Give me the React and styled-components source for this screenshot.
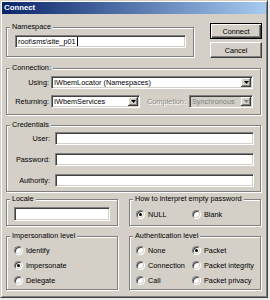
import React from 'react';
import styled, { createGlobalStyle } from 'styled-components';

const Global = createGlobalStyle`
  html, body { margin: 0; padding: 0; background: #ececec; }
  body { font-family: "Liberation Sans", Arial, sans-serif; font-size: 7.3px; color: #000; }
  * { box-sizing: border-box; }
`;

const Window = styled.div`
  width: 268px;
  height: 298px;
  background: #d4d0c8;
  border: 1px solid;
  border-color: #d4d0c8 #404040 #404040 #d4d0c8;
  box-shadow: inset 1px 1px 0 #fff, inset -1px -1px 0 #808080;
  padding: 1px;
  display: flex;
  flex-direction: column;
`;

const TitleBar = styled.div`
  height: 12px;
  background: linear-gradient(to right, #0a246a, #a6caf0);
  color: #fff;
  font-weight: bold;
  font-size: 7.8px;
  line-height: 12px;
  padding-left: 2px;
`;

const Body = styled.div`
  padding: 8px 4px 0 4px;
  display: flex;
  flex-direction: column;
`;

const Row = styled.div`
  display: flex;
  align-items: ${p => p.$align || 'stretch'};
  margin-top: ${p => p.$mt || 0}px;
`;

const Group = styled.fieldset`
  margin: 0;
  margin-top: ${p => p.$mt || 0}px;
  margin-left: ${p => p.$ml || 0}px;
  padding: 0;
  border: 1px solid #808080;
  box-shadow: inset 1px 1px 0 #fff, 1px 1px 0 #fff;
  min-width: 0;
  width: ${p => p.$w}px;
`;

const Caption = styled.legend`
  margin-left: 3px;
  padding: 0 2px;
  height: 10px;
  line-height: 10px;
  background: #d4d0c8;
`;

const Content = styled.div`
  padding: ${p => p.$pad};
  display: flex;
  flex-direction: column;
  gap: ${p => p.$gap || 0}px;
`;

const Field = styled.div`
  width: ${p => p.$w}px;
  height: ${p => p.$h || 13}px;
  background: #fff;
  border: 1px solid;
  border-color: #808080 #fff #fff #808080;
  box-shadow: inset 1px 1px 0 #404040, inset -1px -1px 0 #d4d0c8;
  padding: 0 2px;
  display: flex;
  align-items: center;
  white-space: nowrap;
  overflow: hidden;
  line-height: 9px;
`;

const Caret = styled.span`
  display: inline-block;
  width: 1px;
  height: 9px;
  background: #000;
  margin-left: 1px;
`;

const Combo = styled.div`
  width: ${p => p.$w}px;
  height: 13px;
  background: ${p => (p.$disabled ? '#d4d0c8' : '#fff')};
  color: ${p => (p.$disabled ? '#808080' : '#000')};
  border: 1px solid;
  border-color: #808080 #fff #fff #808080;
  box-shadow: inset 1px 1px 0 #404040, inset -1px -1px 0 #d4d0c8;
  padding: 1px;
  display: flex;
  align-items: center;
`;

const ComboText = styled.span`
  flex: 1;
  padding-left: 1px;
  white-space: nowrap;
  overflow: hidden;
  line-height: 9px;
`;

const ArrowBtn = styled.span`
  width: 10px;
  height: 9px;
  background: #d4d0c8;
  box-shadow: inset -1px -1px 0 #404040, inset 1px 1px 0 #fff, inset -2px -2px 0 #808080;
  display: flex;
  align-items: center;
  justify-content: center;
`;

const Label = styled.span`
  width: ${p => p.$w}px;
  margin-right: ${p => p.$mr || 0}px;
  margin-left: ${p => p.$ml || 0}px;
  text-align: ${p => p.$align || 'right'};
  white-space: nowrap;
  color: ${p => (p.$disabled ? '#8c8a85' : '#000')};
  text-shadow: ${p => (p.$disabled ? '1px 1px 0 #fff' : 'none')};
`;

const Line = styled.div`
  display: flex;
  align-items: center;
  height: 13px;
`;

const ButtonCol = styled.div`
  margin-left: auto;
  padding-top: 1px;
  width: 52px;
  display: flex;
  flex-direction: column;
  gap: 3px;
`;

const Button = styled.div`
  height: 16px;
  display: flex;
  align-items: center;
  justify-content: center;
  background: #d4d0c8;
  border: 1px solid;
  border-color: ${p => (p.$default ? '#000' : '#fff #404040 #404040 #fff')};
  box-shadow: ${p =>
    p.$default
      ? 'inset 1px 1px 0 #fff, inset -1px -1px 0 #404040, inset -2px -2px 0 #808080'
      : 'inset -1px -1px 0 #808080'};
`;

const RadioGrid = styled.div`
  display: grid;
  grid-template-columns: ${p => p.$cols || '1fr'};
  row-gap: 3px;
  padding: ${p => p.$pad};
`;

const RadioItem = styled.div`
  display: flex;
  align-items: center;
  height: 12px;
  gap: 3px;
  white-space: nowrap;
`;

const RadioCircle = styled.span`
  position: relative;
  width: 9px;
  height: 9px;
  flex: none;
  border-radius: 50%;
  background: #fff;
  border: 1px solid;
  border-color: #808080 #fff #fff #808080;
  box-shadow: inset 1px 1px 0 #404040, inset -1px -1px 0 #d4d0c8;
  &::after {
    content: '';
    display: ${p => (p.$checked ? 'block' : 'none')};
    position: absolute;
    left: 2px;
    top: 2px;
    width: 3px;
    height: 3px;
    border-radius: 50%;
    background: #000;
  }
`;

const Arrow = ({ disabled }) => (
  <svg width="5" height="3" viewBox="0 0 5 3">
    <polygon points="0,0 5,0 2.5,3" fill={disabled ? '#808080' : '#000'} />
  </svg>
);

const Radio = ({ label, checked }) => (
  <RadioItem>
    <RadioCircle $checked={checked} />
    <span>{label}</span>
  </RadioItem>
);

const namespace = 'root\\sms\\site_p01';

export default function App() {
  return (
    <>
      <Global />
      <Window>
        <TitleBar>Connect</TitleBar>
        <Body>
          <Row $align="flex-start">
            <Group $w={188}>
              <Caption>Namespace</Caption>
              <Content $pad="3px 7px 8px 8px">
                <Field $w={171}>
                  {namespace}<Caret />
                </Field>
              </Content>
            </Group>
            <ButtonCol>
              <Button $default>Connect</Button>
              <Button>Cancel</Button>
            </ButtonCol>
          </Row>

          <Group $w={255} $mt={5}>
            <Caption>Connection:</Caption>
            <Content $pad="3px 7px 6px 0" $gap={6}>
              <Line>
                <Label $w={42} $mr={2}>Using:</Label>
                <Combo $w={202}>
                  <ComboText>IWbemLocator (Namespaces)</ComboText>
                  <ArrowBtn><Arrow /></ArrowBtn>
                </Combo>
              </Line>
              <Line>
                <Label $w={42} $mr={2}>Returning:</Label>
                <Combo $w={89}>
                  <ComboText>IWbemServices</ComboText>
                  <ArrowBtn><Arrow /></ArrowBtn>
                </Combo>
                <Label $w={42} $ml={7} $align="left" $disabled>Completion:</Label>
                <Combo $w={64} $disabled>
                  <ComboText>Synchronous</ComboText>
                  <ArrowBtn><Arrow disabled /></ArrowBtn>
                </Combo>
              </Line>
            </Content>
          </Group>

          <Group $w={255} $mt={5}>
            <Caption>Credentials</Caption>
            <Content $pad="2px 6px 4px 0" $gap={8}>
              <Line>
                <Label $w={43} $mr={5}>User:</Label>
                <Field $w={199} />
              </Line>
              <Line>
                <Label $w={43} $mr={5}>Password:</Label>
                <Field $w={199} />
              </Line>
              <Line>
                <Label $w={43} $mr={5}>Authority:</Label>
                <Field $w={199} />
              </Line>
            </Content>
          </Group>

          <Row $mt={2}>
            <Group $w={112}>
              <Caption>Locale</Caption>
              <Content $pad="3px 7px 4px 7px">
                <Field $w={96} $h={14} />
              </Content>
            </Group>
            <Group $w={132} $ml={11}>
              <Caption>How to interpret empty password</Caption>
              <RadioGrid $cols="56px auto" $pad="4px 0 0 6px">
                <Radio label="NULL" checked />
                <Radio label="Blank" />
              </RadioGrid>
            </Group>
          </Row>

          <Row $mt={5}>
            <Group $w={112}>
              <Caption>Impersonation level</Caption>
              <RadioGrid $pad="3px 0 3px 7px">
                <Radio label="Identify" />
                <Radio label="Impersonate" checked />
                <Radio label="Delegate" />
              </RadioGrid>
            </Group>
            <Group $w={132} $ml={11}>
              <Caption>Authentication level</Caption>
              <RadioGrid $cols="56px auto" $pad="3px 0 3px 6px">
                <Radio label="None" />
                <Radio label="Packet" checked />
                <Radio label="Connection" />
                <Radio label="Packet integrity" />
                <Radio label="Call" />
                <Radio label="Packet privacy" />
              </RadioGrid>
            </Group>
          </Row>
        </Body>
      </Window>
    </>
  );
}
